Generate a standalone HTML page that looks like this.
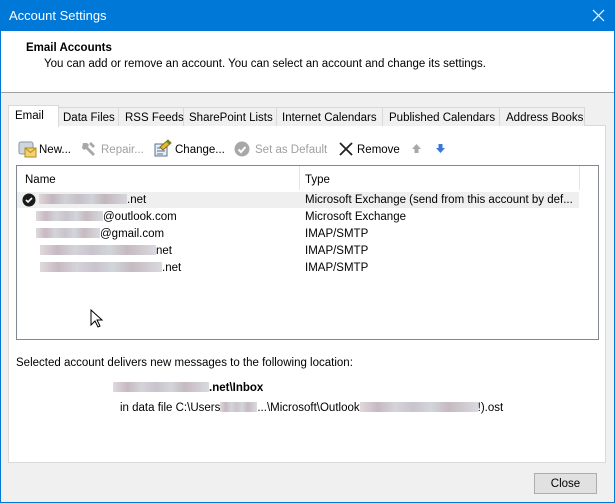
<!DOCTYPE html>
<html><head><style>
*{margin:0;padding:0;box-sizing:border-box}
body{width:615px;height:503px;overflow:hidden;font-family:"Liberation Sans",sans-serif;font-size:11.5px;color:#000;background:#f0f0f0;position:relative}
.a{position:absolute;white-space:nowrap}
.t{margin-top:1px}
.blur{display:inline-block;height:10px;vertical-align:-1px;background:linear-gradient(90deg,#d8d0d4,#b9a7b3 15%,#c9c9cf 30%,#bcb4c0 45%,#c6cbd0 60%,#b7a9b0 75%,#d0d0d8);opacity:.8}
</style></head><body>
<div class="a" style="left:0;top:0;width:615px;height:31px;background:#0078d7"></div>
<div class="a" style="left:9px;top:8px;color:#fff;font-size:13px">Account Settings</div>
<svg class="a" style="left:592px;top:9px" width="13" height="13"><path d="M1 1L12 12M12 1L1 12" stroke="#fff" stroke-width="1.2"/></svg>
<div class="a" style="left:0;top:31px;width:1px;height:472px;background:#0078d7"></div>
<div class="a" style="left:614px;top:31px;width:1px;height:472px;background:#0078d7"></div>
<div class="a" style="left:0;top:502px;width:615px;height:1px;background:#0078d7"></div>
<div class="a" style="left:1px;top:31px;width:613px;height:62px;background:#fff;border-bottom:1px solid #a0a0a0"></div>
<div class="a t" style="left:26px;top:41px;font-weight:bold">Email Accounts</div>
<div class="a t" style="left:44px;top:57px">You can add or remove an account. You can select an account and change its settings.</div>
<div class="a" style="left:8px;top:125px;width:598px;height:338px;background:#fff;border:1px solid #d9d9d9"></div>
<div class="a" style="left:58px;top:107px;width:527px;height:19px;background:#f0f0f0;border:1px solid #d9d9d9;border-bottom:none"></div>
<div class="a" style="left:118px;top:107px;width:1px;height:19px;background:#d9d9d9"></div>
<div class="a" style="left:183px;top:107px;width:1px;height:19px;background:#d9d9d9"></div>
<div class="a" style="left:276px;top:107px;width:1px;height:19px;background:#d9d9d9"></div>
<div class="a" style="left:382px;top:107px;width:1px;height:19px;background:#d9d9d9"></div>
<div class="a" style="left:499px;top:107px;width:1px;height:19px;background:#d9d9d9"></div>
<div class="a" style="left:8px;top:105px;width:51px;height:22px;background:#fff;border:1px solid #d9d9d9;border-bottom:none"></div>
<div class="a t" style="left:15px;top:109px">Email</div>
<div class="a t" style="left:63px;top:111px">Data Files</div>
<div class="a t" style="left:125px;top:111px">RSS Feeds</div>
<div class="a t" style="left:189px;top:111px">SharePoint Lists</div>
<div class="a t" style="left:282px;top:111px">Internet Calendars</div>
<div class="a t" style="left:389px;top:111px">Published Calendars</div>
<div class="a t" style="left:506px;top:111px">Address Books</div>
<svg class="a" style="left:18px;top:140px" width="20" height="18"><rect x="1" y="2" width="14" height="12" rx="2" fill="#cfd6dc" stroke="#8a96a0"/><rect x="7" y="8" width="11" height="9" fill="#f2d36b" stroke="#b28a1f"/><path d="M7 8l5.5 4.5L18 8" stroke="#b28a1f" fill="none"/></svg>
<div class="a t" style="left:39px;top:143px">New...</div>
<svg class="a" style="left:81px;top:140px" width="16" height="16"><path d="M2 3l4 0 2 2-1 2 7 7-2 2-7-7-2 1-2-2z M10 2l4 4-2 2-4-4z" fill="#a8a8a8"/></svg>
<div class="a t" style="left:101px;top:143px;color:#a0a0a0">Repair...</div>
<svg class="a" style="left:154px;top:139px" width="18" height="18"><rect x="1" y="5" width="12" height="12" fill="#e8eef6" stroke="#5a7090"/><path d="M3 9h8M3 12h8M3 15h6" stroke="#5a7090"/><path d="M6 8l8-7 3 3-8 7z" fill="#e4b83a" stroke="#8a6a10"/><path d="M13 2l3 3" stroke="#3a9a3a" stroke-width="2"/></svg>
<div class="a t" style="left:175px;top:143px">Change...</div>
<svg class="a" style="left:234px;top:141px" width="16" height="16"><circle cx="8" cy="8" r="7.5" fill="#a8a8a8"/><path d="M4.5 8.5l2.5 2.5 4.5-5" stroke="#fff" stroke-width="2" fill="none"/></svg>
<div class="a t" style="left:255px;top:143px;color:#a0a0a0">Set as Default</div>
<svg class="a" style="left:339px;top:142px" width="14" height="14"><path d="M1 1L13 13M13 1L1 13" stroke="#222" stroke-width="1.8"/></svg>
<div class="a t" style="left:357px;top:143px">Remove</div>
<svg class="a" style="left:411px;top:143px" width="11" height="11"><path d="M5.5 1L10 6H7.5v4h-4V6H1z" fill="#a8a8a8"/></svg>
<svg class="a" style="left:435px;top:143px" width="11" height="11"><path d="M5.5 10L10 5H7.5V1h-4v4H1z" fill="#3a78d8"/></svg>
<div class="a" style="left:16px;top:165px;width:583px;height:175px;background:#fff;border:1px solid #828790"></div>
<div class="a" style="left:299px;top:166px;width:1px;height:24px;background:#e5e5e5"></div>
<div class="a" style="left:579px;top:166px;width:1px;height:24px;background:#e5e5e5"></div>
<div class="a t" style="left:25px;top:173px">Name</div>
<div class="a t" style="left:305px;top:173px">Type</div>
<div class="a" style="left:17px;top:192px;width:562px;height:16px;background:#efefef"></div>
<svg class="a" style="left:22px;top:193px" width="14" height="14"><circle cx="7" cy="7" r="6.5" fill="#1a1a1a"/><path d="M4 7l2 2 4-4" stroke="#fff" stroke-width="1.6" fill="none"/></svg>
<div class="a t" style="left:39px;top:193px"><span class="blur" style="width:88px"></span>.net</div>
<div class="a t" style="left:36px;top:210px"><span class="blur" style="width:67px"></span>@outlook.com</div>
<div class="a t" style="left:36px;top:227px"><span class="blur" style="width:64px"></span>@gmail.com</div>
<div class="a t" style="left:40px;top:244px"><span class="blur" style="width:116px"></span>net</div>
<div class="a t" style="left:40px;top:261px"><span class="blur" style="width:122px"></span>.net</div>
<div class="a t" style="left:305px;top:193px">Microsoft Exchange (send from this account by def...</div>
<div class="a t" style="left:305px;top:210px">Microsoft Exchange</div>
<div class="a t" style="left:305px;top:227px">IMAP/SMTP</div>
<div class="a t" style="left:305px;top:244px">IMAP/SMTP</div>
<div class="a t" style="left:305px;top:261px">IMAP/SMTP</div>
<svg class="a" style="left:90px;top:309px" width="14" height="20"><path d="M1 1v15l4-4 3 6 2-1-3-6h5z" fill="#fff" stroke="#000"/></svg>
<div class="a t" style="left:16px;top:356px">Selected account delivers new messages to the following location:</div>
<div class="a t" style="left:113px;top:381px;font-weight:bold"><span class="blur" style="width:96px"></span>.net\Inbox</div>
<div class="a t" style="left:120px;top:401px">in data file C:\Users<span class="blur" style="width:37px"></span>...\Microsoft\Outlook<span class="blur" style="width:118px"></span>!).ost</div>
<div class="a" style="left:534px;top:473px;width:63px;height:21px;background:#e1e1e1;border:1px solid #adadad;text-align:center;line-height:20px">Close</div>
</body></html>
